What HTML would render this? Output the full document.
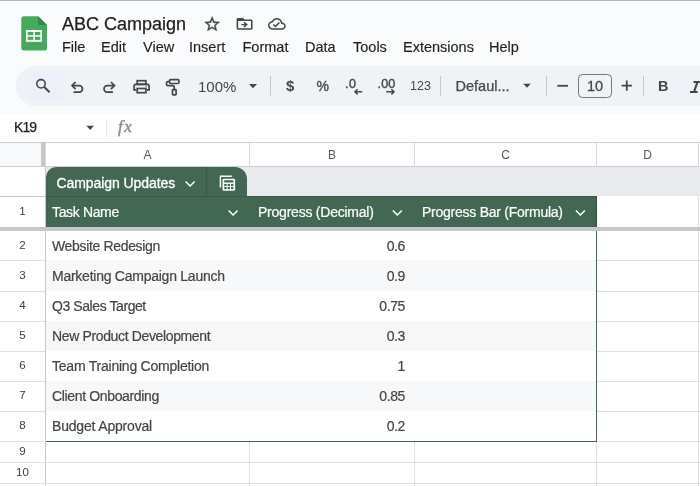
<!DOCTYPE html>
<html><head><meta charset="utf-8">
<style>
*{margin:0;padding:0;box-sizing:border-box}
html,body{width:700px;height:486px;overflow:hidden;background:#f9fbfd;font-family:"Liberation Sans",sans-serif;color:#1f1f1f}
.a{position:absolute}
#topline{left:0;top:0;width:700px;height:1px;background:#a3bcc2}
.title{left:62px;top:14px;font-size:18px;color:#1f1f1f;-webkit-text-stroke:0.25px #1f1f1f;white-space:nowrap}
.menu{top:39px;font-size:14.5px;color:#1f1f1f;-webkit-text-stroke:0.15px #1f1f1f;white-space:nowrap}
#toolbar{left:16px;top:66px;width:720px;height:40px;background:#eff2f7;border-radius:20px}
#fbar{left:0;top:114px;width:700px;height:28px;background:#fff}
#sheet{left:0;top:142px;width:700px;height:344px;background:#fff}
.hl{position:absolute;height:1px;background:#e1e1e1}
.vl{position:absolute;width:1px;background:#e1e1e1}
.rn{position:absolute;left:2px;width:41px;text-align:center;font-size:11.5px;color:#3c3c3c;line-height:13px}
.cell{position:absolute;font-size:14px;letter-spacing:-0.4px;color:#444;-webkit-text-stroke:0.2px #444;white-space:nowrap;line-height:16px}
.num{position:absolute;font-size:14px;letter-spacing:-0.4px;color:#444;-webkit-text-stroke:0.2px #444;text-align:right;white-space:nowrap;line-height:16px}
.colh{position:absolute;top:148px;text-align:center;font-size:12px;color:#575757;line-height:14px}
.tbt{position:absolute;color:#444746;white-space:nowrap;line-height:1}
.hdr{position:absolute;font-size:14px;letter-spacing:-0.35px;color:#fff;-webkit-text-stroke:0.2px #fff;white-space:nowrap;line-height:16px}
</style></head><body><div id="wrap" style="position:absolute;left:0;top:0;width:700px;height:486px;overflow:hidden;will-change:transform">
<div class="a" id="topline"></div><div class="a" style="left:0;top:1px;width:700px;height:1px;background:#fdfefe"></div>

<!-- logo -->
<svg class="a" style="left:21px;top:16px" width="26" height="35" viewBox="0 0 26 35">
  <path d="M3 0.3 H17.2 L26 9 V32 A2.7 2.7 0 0 1 23.3 34.6 H2.9 A2.7 2.7 0 0 1 0.3 32 V3 A2.7 2.7 0 0 1 3 0.3Z" fill="#45aa5b"/>
  <path d="M17.2 0.3 L26 9 H17.2Z" fill="#2e8a47"/>
  <rect x="5" y="14" width="16" height="11.8" fill="#fff"/>
  <rect x="6.7" y="16" width="5.6" height="3.2" fill="#45aa5b"/>
  <rect x="13.9" y="16" width="5.4" height="3.2" fill="#45aa5b"/>
  <rect x="6.7" y="20.7" width="5.6" height="3.2" fill="#45aa5b"/>
  <rect x="13.9" y="20.7" width="5.4" height="3.2" fill="#45aa5b"/>
</svg>

<div class="a title">ABC Campaign</div>
<svg class="a" style="left:203.43px;top:14.78px" width="18.24" height="18.24" viewBox="0 0 24 24"><path fill="#444746" stroke="#444746" stroke-width="0.5" stroke-linejoin="round" d="M22 9.24l-7.19-.62L12 2 9.19 8.63 2 9.24l5.46 4.73L5.82 21 12 17.27 18.18 21l-1.63-7.03L22 9.24zM12 15.4l-3.76 2.27 1-4.28-3.32-2.88 4.38-.38L12 6.1l1.71 4.04 4.38.38-3.32 2.88 1 4.28L12 15.4z"/></svg>
<svg class="a" style="left:235.4px;top:15px" width="19.2" height="17.76" viewBox="0 0 24 24" preserveAspectRatio="none"><path fill="#444746" d="M20 6h-8l-2-2H4c-1.1 0-1.99.9-1.99 2L2 18c0 1.1.9 2 2 2h16c1.1 0 2-.9 2-2V8c0-1.1-.9-2-2-2zm0 12H4V8h16v10zm-7.84-6H8v2h4.16l-1.59 1.59L11.99 17 16 13.01 11.99 9l-1.41 1.41L12.16 12z"/></svg>
<svg class="a" style="left:268.2px;top:15.04px" width="17.76" height="17.76" viewBox="0 0 24 24"><path fill="#444746" d="M19.35 10.04C18.67 6.59 15.64 4 12 4 9.11 4 6.6 5.64 5.35 8.04 2.34 8.36 0 10.91 0 14c0 3.31 2.69 6 6 6h13c2.76 0 5-2.24 5-5 0-2.64-2.050-4.78-4.65-4.96zM19 18H6c-2.21 0-4-1.790-4-4 0-2.05 1.53-3.76 3.56-3.97l1.07-.11.5-.95C8.08 7.14 9.94 6 12 6c2.62 0 4.88 1.86 5.39 4.43l.3 1.5 1.53.11c1.56.1 2.78 1.41 2.78 2.96 0 1.65-1.35 3-3 3zm-9-3.82l-2.09-2.09L6.5 13.5 10 17l6.01-6.01-1.41-1.41z"/></svg>
<div class="a menu" style="left:62px">File</div>
<div class="a menu" style="left:101px">Edit</div>
<div class="a menu" style="left:143px">View</div>
<div class="a menu" style="left:189px">Insert</div>
<div class="a menu" style="left:242.5px">Format</div>
<div class="a menu" style="left:305px">Data</div>
<div class="a menu" style="left:353px">Tools</div>
<div class="a menu" style="left:403px">Extensions</div>
<div class="a menu" style="left:489px">Help</div>

<div class="a" id="toolbar"></div>
<div class="a" style="left:24.5px;top:71px;width:38px;height:29px;background:#ecf0f8"></div>
<svg class="a" style="left:0;top:0" width="700" height="112" viewBox="0 0 700 112">
 <g fill="none" stroke="#444746" stroke-width="1.7">
  <!-- search -->
  <circle cx="41" cy="83.8" r="4.2" stroke-width="1.55"/>
  <path d="M44.2 87 L49.6 92.3" stroke-width="1.9"/>
  <!-- undo -->
  <path d="M72 85.6 H79.2 A3.3 3.3 0 0 1 79.2 92.2 H73.5"/>
  <path d="M75.6 82 L72 85.6 L75.6 89.2"/>
  <!-- redo -->
  <path d="M114.5 85.6 H107.3 A3.3 3.3 0 0 0 107.3 92.2 H113"/>
  <path d="M110.9 82 L114.5 85.6 L110.9 89.2"/>
  <!-- print -->
  <rect x="137.2" y="80.7" width="8.7" height="3.6"/>
  <path d="M136.4 89.8 H134.1 V86 A1.6 1.6 0 0 1 135.7 84.3 H147.5 A1.6 1.6 0 0 1 149.1 86 V89.8 H146.8"/>
  <rect x="137.2" y="88.5" width="8.7" height="4.2"/>
  <!-- paint format -->
  <rect x="169.5" y="79.7" width="9.5" height="3.8" rx="1.3"/>
  <path d="M169.5 81.6 H167.9 Q166.5 81.6 166.5 83 V84.2 Q166.5 85.6 167.9 85.6 H172.8 Q174.2 85.6 174.2 87 V89.6"/>
  <rect x="172.5" y="89.6" width="3.6" height="5.2" rx="0.6"/>
 </g>
 <circle cx="146.2" cy="86.6" r="0.7" fill="#444746"/>
 <!-- dropdown tri -->
 <path d="M249 84 H257 L253 88.3Z" fill="#444746"/>
 <path d="M523.3 83.8 H530.7 L527 87.8Z" fill="#444746"/>
 <!-- separators -->
 <rect x="270" y="76" width="1" height="19.5" fill="#c7c7c7"/>
 <rect x="440" y="76" width="1" height="19.5" fill="#c7c7c7"/>
 <rect x="546" y="76" width="1" height="19.5" fill="#c7c7c7"/>
 <rect x="643" y="76" width="1" height="19.5" fill="#c7c7c7"/>
 <!-- arrows under .0 / .00 -->
 <g fill="none" stroke="#444746" stroke-width="1.5">
  <path d="M355 91.8 H362.2 M357.6 89.2 L355 91.8 L357.6 94.4"/>
  <path d="M394 91.8 H386.2 M391.4 89.2 L394 91.8 L391.4 94.4"/>
  <!-- minus / plus -->
  <path d="M557.3 85.8 H568" stroke-width="1.8"/>
  <path d="M621.6 85.6 H631.9 M626.75 80.4 V90.8" stroke-width="1.8"/>
 </g>
 <rect x="578.5" y="74.5" width="33" height="23" rx="4" fill="none" stroke="#747775" stroke-width="1"/>
</svg>
<div class="a tbt" style="left:198px;top:79px;font-size:15px">100%</div>
<div class="a tbt" style="left:286px;top:78px;font-size:15px;font-weight:bold">$</div>
<div class="a tbt" style="left:316.5px;top:79px;font-size:14px;-webkit-text-stroke:0.35px #444746">%</div>
<div class="a tbt" style="left:345px;top:78px;font-size:12.5px;-webkit-text-stroke:0.4px #444746;letter-spacing:0.6px">.0</div>
<div class="a tbt" style="left:377.5px;top:78px;font-size:12.5px;-webkit-text-stroke:0.4px #444746;letter-spacing:0.2px">.00</div>
<div class="a tbt" style="left:410px;top:80px;font-size:12.5px">123</div>
<div class="a tbt" style="left:455.5px;top:79px;font-size:14.5px;-webkit-text-stroke:0.25px #444746">Defaul...</div>
<div class="a tbt" style="left:587px;top:79px;font-size:14.5px;-webkit-text-stroke:0.3px #444746">10</div>
<div class="a tbt" style="left:658px;top:79px;font-size:14.5px;font-weight:bold">B</div>
<svg class="a" style="left:0;top:0" width="700" height="112"><path fill="#444746" d="M693.5 81 H702 V83 H698.2 L695.4 91 H697.6 V93 H690 V91 H693.2 L696 83 H693.5Z"/></svg>
<div class="a" id="fbar"></div>
<div class="a" style="left:14px;top:119px;font-size:14px;color:#1f1f1f;letter-spacing:-0.9px;line-height:16px;-webkit-text-stroke:0.25px #1f1f1f">K19</div>
<svg class="a" style="left:0;top:112px" width="140" height="30"><path d="M86.4 13.8 H94 L90.2 17.9Z" fill="#444746"/><rect x="106.2" y="8" width="1" height="16.7" fill="#e0e0e0"/></svg>
<div class="a" style="left:118px;top:118px;font-size:17px;color:#8c8c8c;font-family:'Liberation Serif',serif;font-style:italic;line-height:18px;letter-spacing:1.5px;-webkit-text-stroke:0.45px #8c8c8c">fx</div>

<div class="a" id="sheet"></div>
<div class="a" style="left:0;top:142px;width:700px;height:1px;background:#d0d0d0"></div>
<div class="a" style="left:0;top:143px;width:41px;height:23px;background:#f8f9fa"></div>
<div class="a" style="left:41px;top:142px;width:4px;height:25px;background:#c7c7c7"></div>
<div class="a" style="left:0;top:166px;width:700px;height:1px;background:#d0d0d0"></div>
<div class="a" style="left:45px;top:143px;width:1px;height:23px;background:#d9d9d9"></div>
<div class="a" style="left:249px;top:143px;width:1px;height:23px;background:#d9d9d9"></div>
<div class="a" style="left:414px;top:143px;width:1px;height:23px;background:#d9d9d9"></div>
<div class="a" style="left:596px;top:143px;width:1px;height:23px;background:#d9d9d9"></div>
<div class="a" style="left:698px;top:143px;width:1px;height:23px;background:#d9d9d9"></div>
<div class="a colh" style="left:46px;width:203px">A</div>
<div class="a colh" style="left:250px;width:164px">B</div>
<div class="a colh" style="left:415px;width:181px">C</div>
<div class="a colh" style="left:597px;width:101px">D</div>
<div class="a" style="left:46px;top:167px;width:654px;height:29px;background:#e8eaed"></div>
<div class="a" style="left:45px;top:167px;width:1px;height:319px;background:#c7c7c7"></div>
<div class="a" style="left:0;top:196px;width:45px;height:1px;background:#c7c7c7"></div>
<div class="a" style="left:698px;top:196px;width:1px;height:31px;background:#e1e1e1"></div>
<div class="a" id="tab" style="left:46px;top:167px;width:201px;height:30px;background:#426854;border-radius:10px 12px 0 0"></div>
<div class="a" style="left:206px;top:167px;width:1px;height:29px;background:#375a48"></div>
<div class="a hdr" style="left:56.5px;top:175px;-webkit-text-stroke:0.3px #fff;letter-spacing:-0.08px">Campaign Updates</div>
<div class="a" style="left:46px;top:196px;width:551px;height:31px;background:#426854"></div>
<div class="a" style="left:46px;top:196px;width:551px;height:1px;background:#375a48"></div>
<div class="a hdr" style="left:52px;top:204px">Task Name</div>
<div class="a hdr" style="left:258px;top:204px;letter-spacing:-0.23px">Progress (Decimal)</div>
<div class="a hdr" style="left:422px;top:204px;letter-spacing:-0.25px">Progress Bar (Formula)</div>
<svg class="a" style="left:0;top:160px" width="700" height="70">
 <g fill="none" stroke="#fff" stroke-width="1.5">
  <path d="M185.6 21.5 L190.1 26 L194.6 21.5"/>
  <path d="M228.6 50.5 L233.1 55 L237.6 50.5"/>
  <path d="M392.8 50.5 L397.3 55 L401.8 50.5"/>
  <path d="M575.9 50.5 L580.4 55 L584.9 50.5"/>
  <path d="M220.4 27.6 V16.2 H231.8" stroke-width="1.4"/>
 </g>
 <rect x="222.5" y="18.7" width="12.6" height="12" rx="1.4" fill="#fff"/>
 <g fill="#426854">
  <rect x="224.2" y="20.2" width="9.2" height="2.3"/>
  <rect x="224.2" y="23.9" width="2.4" height="2.2"/><rect x="227.6" y="23.9" width="2.4" height="2.2"/><rect x="231" y="23.9" width="2.4" height="2.2"/>
  <rect x="224.2" y="27" width="2.4" height="2.2"/><rect x="227.6" y="27" width="2.4" height="2.2"/><rect x="231" y="27" width="2.4" height="2.2"/>
 </g>
</svg>
<div class="a" style="left:596px;top:196px;width:1px;height:31px;background:#2f5140"></div>
<div class="a" style="left:0;top:227px;width:700px;height:4px;background:#c7c7c7"></div>
<div class="a" style="left:46px;top:260px;width:550px;height:31px;background:#f7f8fa"></div>
<div class="a" style="left:46px;top:321px;width:550px;height:30px;background:#f7f8fa"></div>
<div class="a" style="left:46px;top:381px;width:550px;height:30px;background:#f7f8fa"></div>
<div class="a" style="left:0;top:260px;width:45px;height:1px;background:#e1e1e1"></div>
<div class="a" style="left:597px;top:260px;width:103px;height:1px;background:#e1e1e1"></div>
<div class="a" style="left:0;top:291px;width:45px;height:1px;background:#e1e1e1"></div>
<div class="a" style="left:597px;top:291px;width:103px;height:1px;background:#e1e1e1"></div>
<div class="a" style="left:0;top:321px;width:45px;height:1px;background:#e1e1e1"></div>
<div class="a" style="left:597px;top:321px;width:103px;height:1px;background:#e1e1e1"></div>
<div class="a" style="left:0;top:351px;width:45px;height:1px;background:#e1e1e1"></div>
<div class="a" style="left:597px;top:351px;width:103px;height:1px;background:#e1e1e1"></div>
<div class="a" style="left:0;top:381px;width:45px;height:1px;background:#e1e1e1"></div>
<div class="a" style="left:597px;top:381px;width:103px;height:1px;background:#e1e1e1"></div>
<div class="a" style="left:0;top:411px;width:45px;height:1px;background:#e1e1e1"></div>
<div class="a" style="left:597px;top:411px;width:103px;height:1px;background:#e1e1e1"></div>
<div class="a" style="left:0;top:441px;width:700px;height:1px;background:#e1e1e1"></div>
<div class="a" style="left:0;top:462px;width:700px;height:1px;background:#e1e1e1"></div>
<div class="a" style="left:0;top:483px;width:700px;height:1px;background:#e1e1e1"></div>
<div class="a" style="left:698px;top:231px;width:1px;height:255px;background:#e1e1e1"></div>
<div class="a" style="left:249px;top:442px;width:1px;height:44px;background:#e1e1e1"></div>
<div class="a" style="left:414px;top:442px;width:1px;height:44px;background:#e1e1e1"></div>
<div class="a" style="left:596px;top:442px;width:1px;height:44px;background:#e1e1e1"></div>
<div class="a" style="left:596px;top:231px;width:1px;height:211px;background:#426854"></div>
<div class="a" style="left:46px;top:441px;width:551px;height:1px;background:#426854"></div>
<div class="a rn" style="top:239px">2</div>
<div class="a cell" style="left:52px;top:238px;letter-spacing:-0.34px">Website Redesign</div>
<div class="a num" style="left:250px;width:155px;top:238px">0.6</div>
<div class="a rn" style="top:269px">3</div>
<div class="a cell" style="left:52px;top:268px;letter-spacing:-0.25px">Marketing Campaign Launch</div>
<div class="a num" style="left:250px;width:155px;top:268px">0.9</div>
<div class="a rn" style="top:299px">4</div>
<div class="a cell" style="left:52px;top:298px;letter-spacing:-0.42px">Q3 Sales Target</div>
<div class="a num" style="left:250px;width:155px;top:298px">0.75</div>
<div class="a rn" style="top:329px">5</div>
<div class="a cell" style="left:52px;top:328px;letter-spacing:-0.36px">New Product Development</div>
<div class="a num" style="left:250px;width:155px;top:328px">0.3</div>
<div class="a rn" style="top:359px">6</div>
<div class="a cell" style="left:52px;top:358px;letter-spacing:-0.23px">Team Training Completion</div>
<div class="a num" style="left:250px;width:155px;top:358px">1</div>
<div class="a rn" style="top:389px">7</div>
<div class="a cell" style="left:52px;top:388px;letter-spacing:-0.35px">Client Onboarding</div>
<div class="a num" style="left:250px;width:155px;top:388px">0.85</div>
<div class="a rn" style="top:419px">8</div>
<div class="a cell" style="left:52px;top:418px;letter-spacing:-0.18px">Budget Approval</div>
<div class="a num" style="left:250px;width:155px;top:418px">0.2</div>
<div class="a rn" style="top:205px">1</div>
<div class="a rn" style="top:445px">9</div>
<div class="a rn" style="top:466px">10</div>
</div></body></html>
